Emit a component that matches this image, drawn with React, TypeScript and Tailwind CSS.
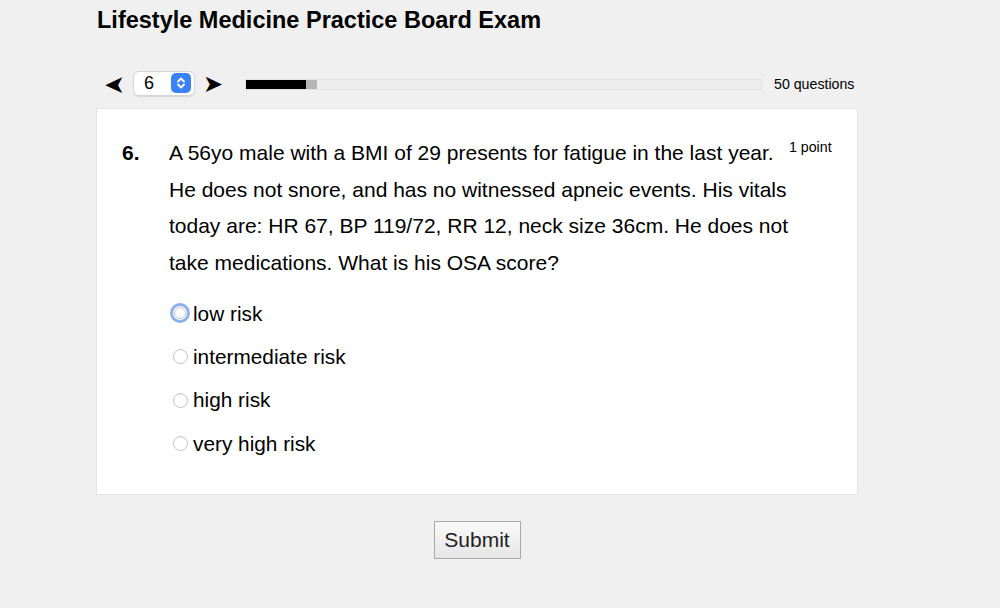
import React from 'react';

const options = ['low risk', 'intermediate risk', 'high risk', 'very high risk'];

const lines = [
  'A 56yo male with a BMI of 29 presents for fatigue in the last year.',
  'He does not snore, and has no witnessed apneic events. His vitals',
  'today are: HR 67, BP 119/72, RR 12, neck size 36cm. He does not',
  'take medications. What is his OSA score?',
];

export default function App() {
  return (
    <div className="w-[1000px] h-[608px] bg-[#f0f0f0] text-black font-['Liberation_Sans',Arial,sans-serif] overflow-hidden">
      <div className="ml-[96px] w-[762px]">
        <h1 className="pt-[7px] pl-[1px] text-[23.5px] leading-[27px] font-bold">Lifestyle Medicine Practice Board Exam</h1>

        <div className="mt-[37px] flex items-center h-[26px] whitespace-nowrap">
          <span className="ml-[8px] text-[25px] leading-none -scale-x-100 inline-block shrink-0">➤</span>
          <div className="ml-[8px] -mt-[2px] shrink-0 w-[62px] h-[25px] bg-white rounded-[6px] border border-[#d6d6d6] shadow-[0_1px_1px_rgba(0,0,0,0.1)] flex items-center justify-between pl-[10px] pr-[3px]">
            <span className="text-[18px] leading-none">6</span>
            <span className="w-[20px] h-[20px] rounded-[5px] bg-[#3b82f6] flex items-center justify-center">
              <svg width="10" height="14" viewBox="0 0 10 14" fill="none" stroke="white" strokeWidth="1.8" strokeLinecap="round" strokeLinejoin="round">
                <path d="M2 5.5 L5 2.5 L8 5.5" />
                <path d="M2 8.5 L5 11.5 L8 8.5" />
              </svg>
            </span>
          </div>
          <span className="ml-[8px] text-[24px] leading-none inline-block shrink-0">➤</span>
          <div className="ml-[22px] shrink-0 w-[517px] h-[11px] bg-[#ededed] border border-[#e2e2e2] flex">
            <div className="w-[60px] h-full bg-black" />
            <div className="w-[11px] h-full bg-[#b5b5b5]" />
          </div>
          <span className="ml-[12px] text-[14.2px] leading-none">50 questions</span>
        </div>

        <div className="mt-[11px] h-[387px] bg-white border border-[#e4e4e4] pt-[26px]">
          <div className="flex">
            <span className="ml-[25px] w-[47px] text-[21px] leading-[36.7px] font-bold">6.</span>
            <p className="w-[619px] text-[21px] leading-[36.7px] whitespace-nowrap">
              {lines.map((l, i) => (
                <React.Fragment key={i}>
                  {l}
                  {i < lines.length - 1 && <br />}
                </React.Fragment>
              ))}
            </p>
            <span className="ml-[1px] mt-[2px] text-[14.2px] leading-[20px]">1 point</span>
          </div>
          <div className="mt-[10px] ml-[73px] flex flex-col">
            {options.map((o, i) => (
              <label key={o} className="flex items-center h-[43.3px] text-[20.8px]">
                {i === 0 ? (
                  <span className="w-[20px] h-[20px] rounded-full border-[3px] border-[#8fb0f0] bg-white mr-[3px] flex items-center justify-center">
                    <span className="w-[12px] h-[12px] rounded-full border border-[#c8c8c8]" />
                  </span>
                ) : (
                  <span className="ml-[3px] w-[15px] h-[15px] rounded-full border border-[#c4c4c4] bg-white mr-[5px] shadow-[inset_0_1px_1px_rgba(0,0,0,0.05)]" />
                )}
                <span>{o}</span>
              </label>
            ))}
          </div>
        </div>

        <div className="mt-[26px] flex justify-center">
          <button className="w-[87px] h-[38px] border border-[#a9a9a9] bg-gradient-to-b from-[#fafafa] to-[#e6e6e6] text-[21px] text-[#222]">Submit</button>
        </div>
      </div>
    </div>
  );
}
